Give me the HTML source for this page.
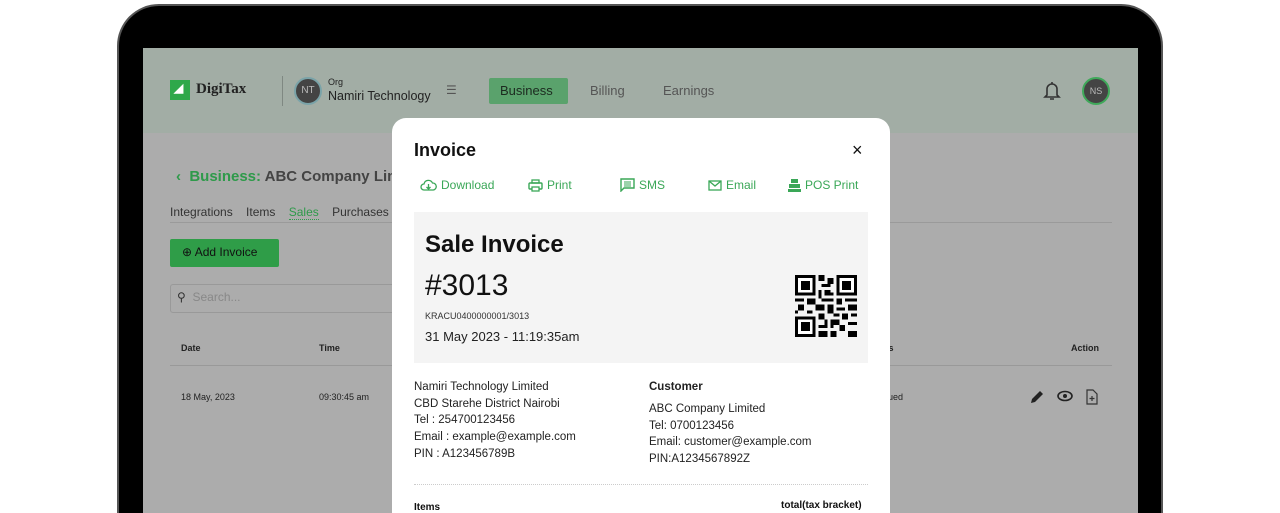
<!DOCTYPE html>
<html style="width:1280px;height:513px;overflow:hidden"><head><meta charset="utf-8"><style>
*{margin:0;padding:0;box-sizing:border-box}
body{width:1280px;height:513px;overflow:hidden;background:#fff;font-family:"Liberation Sans",sans-serif;position:relative}
.abs{position:absolute}
.clip{left:0;top:0;width:1280px;height:513px;overflow:hidden}
.bezel{left:117px;top:4px;width:1046px;height:509px;border-radius:42px 42px 0 0;background:#000;border:2px solid #555;border-bottom:none}
.screen{left:143px;top:48px;width:995px;height:465px;background:#acacac;overflow:hidden}
.hdr{left:0;top:0;width:995px;height:85px;background:#a2ada5}
.t{position:absolute;white-space:nowrap}
.g{color:#2e9a4a}
.modal{left:392px;top:118px;width:498px;height:395px;background:#fff;border-radius:14px 14px 0 0;overflow:hidden}
.act{position:absolute;top:60px;font-size:12px;color:#3aa757;display:flex;align-items:center;gap:4px}
</style></head><body>
<div class="abs clip">
<div class="abs bezel"></div>
<div class="abs screen">
 <div class="abs hdr"></div>
 <div class="abs" style="left:27px;top:32px;width:20px;height:20px;background:#2ea84a"></div>
 <div class="t" style="left:31px;top:33px;color:#fff;font-size:12px;font-weight:bold">◢</div>
 <div class="t" style="left:53px;top:33px;font-size:15px;font-weight:bold;color:#222;font-family:'Liberation Serif',serif">DigiTax</div>
 <div class="abs" style="left:139px;top:28px;width:1px;height:30px;background:#7f8882"></div>
 <div class="abs" style="left:151px;top:29px;width:28px;height:28px;border-radius:50%;background:#444;border:2px solid #7aa3a8;color:#bbb;font-size:10px;text-align:center;line-height:24px">NT</div>
 <div class="t" style="left:185px;top:29px;font-size:9px;color:#222">Org</div>
 <div class="t" style="left:185px;top:41px;font-size:12.5px;color:#222">Namiri Technology</div>
 <div class="t" style="left:303px;top:35px;font-size:12px;color:#555">☰</div>
 <div class="abs" style="left:346px;top:30px;width:79px;height:26px;background:#5aa26c;border-radius:2px"></div>
 <div class="t" style="left:357px;top:35px;font-size:13px;color:#1c2a1f">Business</div>
 <div class="t" style="left:447px;top:35px;font-size:13px;color:#555">Billing</div>
 <div class="t" style="left:520px;top:35px;font-size:13px;color:#555">Earnings</div>
 <svg class="abs" style="left:900px;top:33px" width="18" height="20" viewBox="0 0 18 20"><path d="M4 14V8a5 5 0 0 1 10 0v6l2 2H2z" fill="none" stroke="#333" stroke-width="1.6"/><path d="M9 1v2M7 18h4" stroke="#333" stroke-width="1.6"/></svg>
 <div class="abs" style="left:939px;top:29px;width:28px;height:28px;border-radius:50%;background:#444;border:2px solid #3fa95a;color:#bbb;font-size:9px;text-align:center;line-height:24px">NS</div>
 <div class="t g" style="left:33px;top:120px;font-size:15px;font-weight:bold">‹&nbsp;&nbsp;Business: <span style="color:#444">ABC Company Limited</span></div>
 <div class="t" style="left:27px;top:157px;font-size:12px;color:#333">Integrations&nbsp;&nbsp;&nbsp;&nbsp;Items&nbsp;&nbsp;&nbsp;&nbsp;<span class="g" style="border-bottom:1px dotted #2e9a4a">Sales</span>&nbsp;&nbsp;&nbsp;&nbsp;Purchases</div>
 <div class="abs" style="left:27px;top:174px;width:942px;height:1px;background:#9a9a9a"></div>
 <div class="abs" style="left:27px;top:191px;width:109px;height:28px;background:#2f9d48;border-radius:2px"></div>
 <div class="t" style="left:39px;top:197px;font-size:12px;color:#111">⊕ Add Invoice</div>
 <div class="abs" style="left:27px;top:236px;width:240px;height:29px;border:1px solid #999;border-radius:3px"></div>
 <div class="t" style="left:34px;top:242px;font-size:12px;color:#888"><span style="color:#333">⚲</span>&nbsp;&nbsp;Search...</div>
 <div class="t" style="left:38px;top:295px;font-size:9px;font-weight:bold;color:#222">Date</div>
 <div class="t" style="left:176px;top:295px;font-size:9px;font-weight:bold;color:#222">Time</div>
 <div class="t" style="left:740px;top:295px;font-size:9px;font-weight:bold;color:#222">us</div>
 <div class="t" style="left:928px;top:295px;font-size:9px;font-weight:bold;color:#222">Action</div>
 <div class="abs" style="left:27px;top:317px;width:942px;height:1px;background:#999"></div>
 <div class="t" style="left:38px;top:344px;font-size:9px;color:#222">18 May, 2023</div>
 <div class="t" style="left:176px;top:344px;font-size:9px;color:#222">09:30:45 am</div>
 <div class="t" style="left:740px;top:344px;font-size:9px;color:#222">eued</div>
 <svg class="abs" style="left:886px;top:340px" width="80" height="18" viewBox="0 0 80 18"><path d="M2 15l1-4 8-8 3 3-8 8z" fill="#222"/><ellipse cx="36" cy="8" rx="7" ry="4.5" fill="none" stroke="#222" stroke-width="1.6"/><circle cx="36" cy="8" r="2" fill="#222"/><path d="M58 2h6l4 4v10H58z" fill="none" stroke="#333" stroke-width="1.2"/><path d="M63 8v5M60.5 10.5h5" stroke="#333" stroke-width="1.2"/></svg>
</div>
<div class="abs modal">
 <div class="t" style="left:22px;top:22px;font-size:18px;font-weight:bold;color:#111">Invoice</div>
 <div class="t" style="left:460px;top:22px;font-size:18px;color:#111">×</div>
 <div class="act" style="left:28px"><svg width="17" height="12" viewBox="0 0 17 12"><path d="M4 11a3 3 0 0 1 0-6 4.5 4.5 0 0 1 8.5-1A3.5 3.5 0 0 1 13 11z" fill="none" stroke="#3aa757" stroke-width="1.3"/><path d="M8.5 5v5M6.5 8l2 2 2-2" stroke="#3aa757" stroke-width="1.3" fill="none"/></svg>Download</div>
 <div class="act" style="left:136px"><svg width="15" height="13" viewBox="0 0 15 13"><rect x="1" y="4" width="13" height="6" rx="1" fill="none" stroke="#3aa757" stroke-width="1.4"/><rect x="4" y="1" width="7" height="3" fill="none" stroke="#3aa757" stroke-width="1.3"/><rect x="4" y="8" width="7" height="4" fill="#fff" stroke="#3aa757" stroke-width="1.3"/></svg>Print</div>
 <div class="act" style="left:228px"><svg width="15" height="14" viewBox="0 0 15 14"><path d="M1 1h13v9H4l-3 3z" fill="none" stroke="#3aa757" stroke-width="1.4"/><path d="M4 4h7M4 6h7M4 8h7" stroke="#3aa757"/></svg>SMS</div>
 <div class="act" style="left:316px"><svg width="14" height="11" viewBox="0 0 14 11"><rect x="1" y="1" width="12" height="9" fill="none" stroke="#3aa757" stroke-width="1.3"/><path d="M1 1l6 5 6-5" fill="none" stroke="#3aa757" stroke-width="1.3"/></svg>Email</div>
 <div class="act" style="left:396px"><svg width="13" height="14" viewBox="0 0 13 14"><path d="M3 1h7v4H3zM1 6h11v4H1zM0 11h13v3H0z" fill="#3aa757"/></svg>POS Print</div>
 <div class="abs" style="left:22px;top:94px;width:454px;height:151px;background:#f4f4f4"></div>
 <div class="t" style="left:33px;top:113px;font-size:24px;font-weight:bold;color:#111">Sale Invoice</div>
 <div class="t" style="left:33px;top:151px;font-size:30px;color:#111">#3013</div>
 <div class="t" style="left:33px;top:193px;font-size:9px;color:#333">KRACU0400000001/3013</div>
 <div class="t" style="left:33px;top:211px;font-size:13px;color:#222">31 May 2023 - 11:19:35am</div>
 <svg class="abs" style="left:403px;top:157px" width="62" height="62" viewBox="0 0 21 21" shape-rendering="crispEdges"><g fill="#000">
 <path d="M0 0h7v7H0zM14 0h7v7h-7zM0 14h7v7H0z"/></g>
 <g fill="#fff"><path d="M1 1h5v5H1zM15 1h5v5h-5zM1 15h5v5H1z"/></g>
 <g fill="#000"><path d="M2 2h3v3H2zM16 2h3v3h-3zM2 16h3v3H2z"/>
 <path d="M8 0h2v2H8zM11 1h2v2h-2zM9 3h3v1H9zM8 5h1v3H8zM10 5h2v2h-2zM12 6h1v1h-1zM0 8h3v1H0zM4 8h3v2H4zM1 10h2v2H1zM9 8h4v1H9zM14 8h2v2h-2zM17 8h4v1h-4zM18 10h3v2h-3zM7 10h3v2H7zM11 10h2v3h-2zM14 11h3v1h-3zM0 12h1v1H0zM4 12h2v1H4zM8 13h2v2H8zM13 13h2v1h-2zM16 13h2v2h-2zM19 13h2v1h-2zM10 15h1v3h-1zM12 15h3v2h-3zM18 16h3v1h-3zM8 17h2v1H8zM15 17h2v2h-2zM8 19h3v2H8zM12 19h2v2h-2zM18 19h3v2h-3zM12 17h1v1h-1z"/></g></svg>
 <div class="t" style="left:22px;top:261px;font-size:11.5px;color:#222;line-height:16.7px">Namiri Technology Limited<br>CBD Starehe District Nairobi<br>Tel : 254700123456<br>Email : example@example.com<br>PIN : A123456789B</div>
 <div class="t" style="left:257px;top:263px;font-size:11.5px;font-weight:bold;color:#222">Customer</div>
 <div class="t" style="left:257px;top:283px;font-size:11.5px;color:#222;line-height:16.7px">ABC Company Limited<br>Tel: 0700123456<br>Email: customer@example.com<br>PIN:A1234567892Z</div>
 <div class="abs" style="left:22px;top:366px;width:454px;border-top:1px dotted #ccc"></div>
 <div class="t" style="left:22px;top:384px;font-size:10px;font-weight:bold;color:#111">Items</div>
 <div class="t" style="left:389px;top:382px;font-size:10px;font-weight:bold;color:#111">total(tax bracket)</div>
</div>
</div>
</body></html>
